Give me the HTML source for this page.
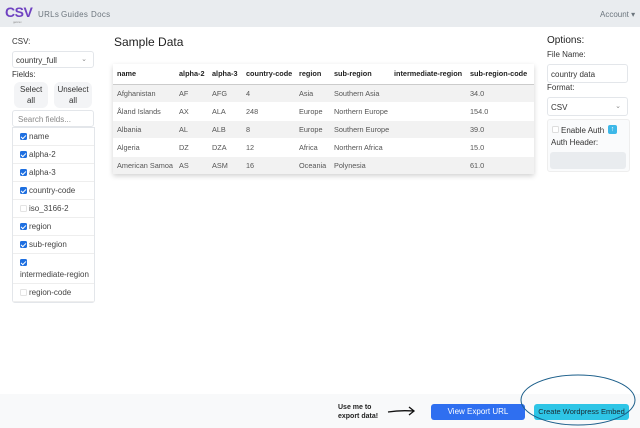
<!DOCTYPE html>
<html><head><meta charset="utf-8"><style>
*{box-sizing:border-box;margin:0;padding:0}
body{width:640px;height:428px;position:relative;overflow:hidden;background:#fff;font-family:"Liberation Sans",sans-serif;color:#212529}
.a{position:absolute;white-space:nowrap}
.nav{left:0;top:0;width:640px;height:27px;background:#e9ecef}
.nl{font-size:8px;letter-spacing:.3px;color:#6c757d;top:10px}
.lbl{font-size:8px;color:#333}
.box{border:1px solid #e3e6ea;border-radius:3px;background:#fff}
.fl{left:13px;width:81px;height:18px;border-bottom:1px solid #eee;font-size:8px;color:#444}
.cb{position:absolute;left:7px;top:5px;width:7px;height:7px;border-radius:1.5px;background:#1e6fe0}
.cb::after{content:"";position:absolute;left:2px;top:.5px;width:2px;height:4px;border:solid #fff;border-width:0 1px 1px 0;transform:rotate(45deg)}
.ucb{position:absolute;left:7px;top:5px;width:7px;height:7px;border-radius:1.5px;border:1px solid #e3e3e3}
.fl span{position:absolute;left:16px;top:4px}
table{border-collapse:collapse;font-size:7.3px;table-layout:fixed}
td,th{padding:0 0 0 4px;height:18px;text-align:left;white-space:nowrap;overflow:hidden}
th{font-weight:bold;height:20px;color:#222;border-bottom:1px solid #ccc}
td{color:#555;border-top:1px solid #fff}
tr:nth-child(even) td{background:#f2f2f2}
</style></head><body>
<div class="a nav"></div>
<div class="a" style="left:5px;top:4px;font-size:14px;font-weight:bold;color:#6f42c1;letter-spacing:-.5px">CSV</div>
<div class="a" style="left:13px;top:20px;font-size:3px;color:#888">getcsv</div>
<div class="a nl" style="left:38px">URLs</div>
<div class="a nl" style="left:61px">Guides</div>
<div class="a nl" style="left:91px">Docs</div>
<div class="a nl" style="left:600px;font-size:8px;letter-spacing:0">Account ▾</div>

<div class="a lbl" style="left:12px;top:37px">CSV:</div>
<div class="a box" style="left:12px;top:51px;width:82px;height:17px;font-size:8px;color:#333;padding:4px 3px">country_full<span style="position:absolute;right:6px;top:3px;font-size:7px;color:#888">⌄</span></div>
<div class="a lbl" style="left:12px;top:70px">Fields:</div>
<div class="a" style="left:14px;top:82px;width:34px;height:26px;border-radius:6px;background:#f3f4f6;font-size:8px;text-align:center;line-height:11px;padding:2px 6px 0;color:#333;white-space:normal">Select all</div>
<div class="a" style="left:54px;top:82px;width:38px;height:26px;border-radius:6px;background:#f3f4f6;font-size:8px;text-align:center;line-height:11px;padding-top:2px;color:#333;white-space:normal">Unselect all</div>
<div class="a box" style="left:12px;top:110px;width:82px;height:17px;font-size:8px;color:#888;padding:4px 5px">Search fields...</div>
<div class="a box" style="left:12px;top:127px;width:83px;height:176px;border-radius:0 0 3px 3px"></div>
<div class="a fl" style="top:128px"><i class="cb"></i><span>name</span></div>
<div class="a fl" style="top:146px"><i class="cb"></i><span>alpha-2</span></div>
<div class="a fl" style="top:164px"><i class="cb"></i><span>alpha-3</span></div>
<div class="a fl" style="top:182px"><i class="cb"></i><span>country-code</span></div>
<div class="a fl" style="top:200px"><i class="ucb"></i><span>iso_3166-2</span></div>
<div class="a fl" style="top:218px"><i class="cb"></i><span>region</span></div>
<div class="a fl" style="top:236px"><i class="cb"></i><span>sub-region</span></div>
<div class="a fl" style="top:254px;height:30px"><i class="cb"></i><span style="left:7px;top:16px">intermediate-region</span></div>
<div class="a fl" style="top:284px"><i class="ucb"></i><span>region-code</span></div>

<div class="a" style="left:114px;top:35px;font-size:12px;color:#222">Sample Data</div>
<div class="a" style="left:113px;top:64px;width:421px;height:110px;box-shadow:0 2px 5px rgba(0,0,0,.18);overflow:hidden">
<table style="width:421px">
<colgroup><col style="width:62px"><col style="width:33px"><col style="width:34px"><col style="width:53px"><col style="width:35px"><col style="width:60px"><col style="width:76px"><col style="width:68px"></colgroup>
<tr><th>name</th><th>alpha-2</th><th>alpha-3</th><th>country-code</th><th>region</th><th>sub-region</th><th>intermediate-region</th><th>sub-region-code</th></tr>
<tr><td>Afghanistan</td><td>AF</td><td>AFG</td><td>4</td><td>Asia</td><td>Southern Asia</td><td></td><td>34.0</td></tr>
<tr><td>Åland Islands</td><td>AX</td><td>ALA</td><td>248</td><td>Europe</td><td>Northern Europe</td><td></td><td>154.0</td></tr>
<tr><td>Albania</td><td>AL</td><td>ALB</td><td>8</td><td>Europe</td><td>Southern Europe</td><td></td><td>39.0</td></tr>
<tr><td>Algeria</td><td>DZ</td><td>DZA</td><td>12</td><td>Africa</td><td>Northern Africa</td><td></td><td>15.0</td></tr>
<tr><td>American Samoa</td><td>AS</td><td>ASM</td><td>16</td><td>Oceania</td><td>Polynesia</td><td></td><td>61.0</td></tr>
</table></div>

<div class="a" style="left:547px;top:35px;font-size:10px;color:#222">Options:</div>
<div class="a lbl" style="left:547px;top:50px">File Name:</div>
<div class="a box" style="left:547px;top:64px;width:81px;height:19px;font-size:8px;color:#333;padding:5px 3px">country data</div>
<div class="a lbl" style="left:547px;top:83px">Format:</div>
<div class="a box" style="left:547px;top:97px;width:81px;height:19px;font-size:8px;color:#333;padding:5px 3px">CSV<span style="position:absolute;right:6px;top:4px;font-size:7px;color:#888">⌄</span></div>
<div class="a box" style="left:547px;top:119px;width:83px;height:53px;border-color:#eee;background:#fafbfc"></div>
<div class="a" style="left:552px;top:126px;width:7px;height:7px;border:1px solid #ddd;border-radius:1.5px;background:#fff"></div>
<div class="a lbl" style="left:561px;top:126px">Enable Auth</div>
<div class="a" style="left:608px;top:125px;width:9px;height:9px;border-radius:2px;background:#3db8e8;color:#fff;font-size:7px;text-align:center;line-height:9px">↑</div>
<div class="a lbl" style="left:551px;top:138px">Auth Header:</div>
<div class="a" style="left:550px;top:152px;width:76px;height:17px;border-radius:3px;background:#e9ecef"></div>

<div class="a" style="left:0;top:394px;width:640px;height:34px;background:#f8f9fa"></div>
<div class="a" style="left:338px;top:403px;font-size:7px;font-weight:bold;color:#222;line-height:9px">Use me to<br>export data!</div>
<svg class="a" style="left:386px;top:404px" width="32" height="14"><path d="M2 8 Q14 6 28 7 M23 3 L28 7 L23 11" stroke="#111" stroke-width="1.3" fill="none"/></svg>
<div class="a" style="left:431px;top:404px;width:94px;height:16px;border-radius:3px;background:#2f6ff0;color:#fff;font-size:8px;text-align:center;line-height:16px">View Export URL</div>
<div class="a" style="left:534px;top:404px;width:95px;height:16px;border-radius:3px;background:#2ec5e6;color:#1a2a33;font-size:7.5px;text-align:center;line-height:16px">Create Wordpress Embed</div>
<svg class="a" style="left:518px;top:373px" width="122" height="55"><ellipse cx="60" cy="27" rx="57" ry="25" stroke="#1b5e8a" stroke-width="1" fill="none"/></svg>
</body></html>
